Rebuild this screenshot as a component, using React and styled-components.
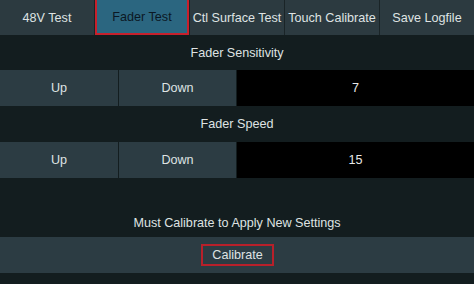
import React, { useState } from "react";
import styled, { createGlobalStyle } from "styled-components";

const GlobalStyle = createGlobalStyle`
	html, body {
		margin: 0;
		padding: 0;
		background: #131d1f;
	}
	body {
		font-family: "Liberation Sans", Arial, sans-serif;
	}
`;

const tabs = ["48V Test", "Fader Test", "Ctl Surface Test", "Touch Calibrate", "Save Logfile"];

const settings = [
	{ name: "Fader Sensitivity", value: 7 },
	{ name: "Fader Speed", value: 15 },
];

const App = () => {
	const [active, setActive] = useState(1);
	const [values, setValues] = useState(settings.map((s) => s.value));

	const change = (i, d) => {
		setValues(values.map((v, j) => (j === i ? v + d : v)));
	};

	return (
		<Screen>
			<GlobalStyle />
			<TabBar>
				{tabs.map((t, i) => (
					<Tab key={t} isActive={i === active} onClick={() => setActive(i)}>
						{t}
					</Tab>
				))}
			</TabBar>
			{settings.map((s, i) => (
				<React.Fragment key={s.name}>
					<Label tall={i > 0}>{s.name}</Label>
					<ControlRow>
						<Button onClick={() => change(i, 1)}>Up</Button>
						<Button onClick={() => change(i, -1)}>Down</Button>
						<Value>{values[i]}</Value>
					</ControlRow>
				</React.Fragment>
			))}
			<Message>Must Calibrate to Apply New Settings</Message>
			<CalibrateBar>
				<CalibrateButton>Calibrate</CalibrateButton>
			</CalibrateBar>
		</Screen>
	);
};

const Screen = styled.div`
	width: 474px;
	height: 284px;
	display: flex;
	flex-direction: column;
	background: #131d1f;
	color: #dfe3e3;
	font-size: 12.6px;
	overflow: hidden;
`;

const TabBar = styled.div`
	height: 35px;
	display: grid;
	grid-template-columns: repeat(5, 1fr);
	gap: 1px;
	background: #1a2427;
`;

const Tab = styled.div`
	display: flex;
	align-items: center;
	justify-content: center;
	white-space: nowrap;
	box-sizing: border-box;
	background: ${(p) => (p.isActive ? "#2b6680" : "#2c3a40")};
	color: ${(p) => (p.isActive ? "#0b1824" : "#dfe3e3")};
	border: ${(p) => (p.isActive ? "2px solid #c8202c" : "none")};
	border-top: none;
	cursor: pointer;
`;

const Label = styled.div`
	height: ${(p) => (p.tall ? "36px" : "35px")};
	display: flex;
	align-items: center;
	justify-content: center;
`;

const ControlRow = styled.div`
	height: 36px;
	display: grid;
	grid-template-columns: 118px 117px 1fr;
	gap: 1px;
	background: #131d1f;
`;

const Button = styled.div`
	display: flex;
	align-items: center;
	justify-content: center;
	background: #2c3c43;
	cursor: pointer;
`;

const Value = styled.div`
	display: flex;
	align-items: center;
	justify-content: center;
	background: #000;
	color: #e8e8e8;
`;

const Message = styled.div`
	height: 59px;
	box-sizing: border-box;
	display: flex;
	align-items: flex-end;
	justify-content: center;
	padding-bottom: 7px;
`;

const CalibrateBar = styled.div`
	height: 36px;
	display: flex;
	align-items: center;
	justify-content: center;
	background: #2c3c43;
`;

const CalibrateButton = styled.div`
	width: 73px;
	height: 22px;
	box-sizing: border-box;
	border: 2px solid #b8202a;
	display: flex;
	align-items: center;
	justify-content: center;
	margin-left: 1px;
	cursor: pointer;
`;

export default App;
